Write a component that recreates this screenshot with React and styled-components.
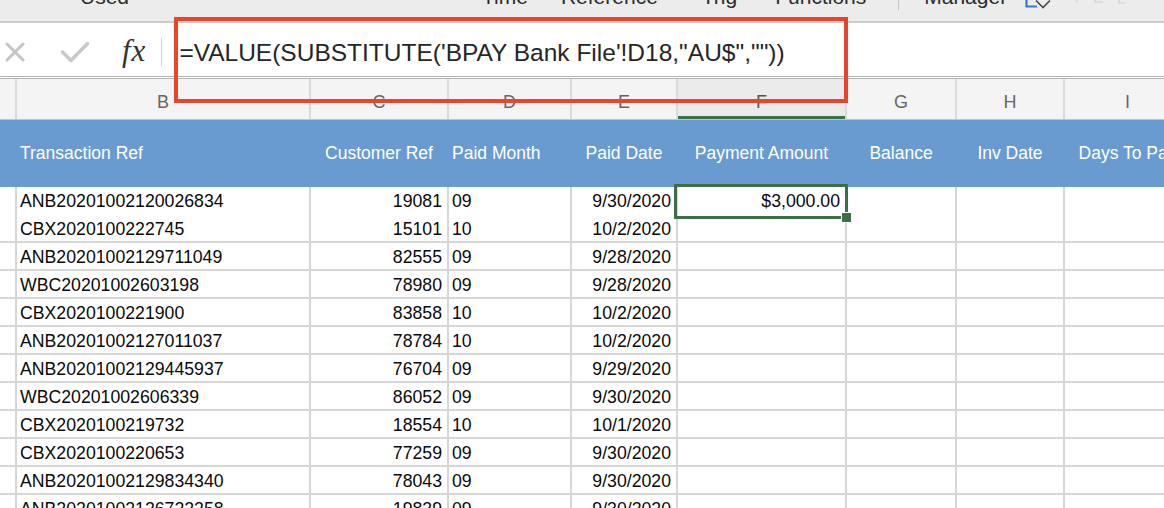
import React from "react";
import styled, { createGlobalStyle } from "styled-components";

const GlobalStyle = createGlobalStyle`
  *, *::before, *::after {
    box-sizing: border-box;
  }
  body {
    margin: 0;
    background: #fff;
    font-family: "Liberation Sans", Arial, sans-serif;
  }
`;

// row header + columns B..I, 2px grid lines come from the gaps
const COLUMNS = "15px 292px 136px 121px 104px 167px 108px 106px 125px";

const Window = styled.div`
  position: relative;
  width: 1164px;
  height: 508px;
  overflow: hidden;
  background: #fff;
`;

const Ribbon = styled.div`
  height: 23px;
  display: flex;
  align-items: flex-start;
  padding-left: 80px;
  background: #ececec;
  border-bottom: 2px solid #cbcbcb;
  overflow: hidden;
`;

const RibbonLabel = styled.span`
  margin-left: ${(p) => p.$gap || 0}px;
  margin-top: -15px;
  font-size: 21px;
  line-height: 24px;
  color: #2b2b2b;
  white-space: nowrap;
`;

const RibbonDivider = styled.span`
  margin-left: ${(p) => p.$gap || 0}px;
  width: 1px;
  height: 10px;
  background: #c2c2c2;
`;

const RibbonIcons = styled.div`
  margin-left: ${(p) => p.$gap || 0}px;
  display: flex;
  gap: 20px;
`;

const FormulaBar = styled.div`
  height: 56px;
  display: flex;
  align-items: center;
  padding-top: 4px;
  background: #fff;
  border-bottom: 3px double #b4b4b4;
`;

const BarIcon = styled.span`
  display: flex;
  margin-left: ${(p) => p.$gap}px;
`;

const Fx = styled.span`
  margin-left: 32px;
  margin-top: -2px;
  font-family: "Liberation Serif", "Times New Roman", serif;
  font-style: italic;
  font-size: 31px;
  letter-spacing: 1px;
  color: #333;
`;

const BarDivider = styled.span`
  margin-left: 15px;
  width: 1px;
  height: 28px;
  background: #d4d4d4;
`;

const Formula = styled.span`
  margin-left: 17px;
  margin-top: 3px;
  font-size: 24.5px;
  color: #262626;
  white-space: nowrap;
`;

const ColumnHeader = styled.div`
  display: grid;
  grid-template-columns: ${COLUMNS};
  column-gap: 2px;
  height: 41px;
  background: #dadada;
  border-bottom: 1px solid #c4c4c4;
`;

const ColumnLetter = styled.div`
  display: flex;
  align-items: center;
  justify-content: center;
  padding-top: 9px;
  background: ${(p) => (p.$active ? "#ebebeb" : "#f4f4f4")};
  color: ${(p) => (p.$active ? "#2f6b3f" : "#666")};
  font-size: 18px;
  border-bottom: 3px solid ${(p) => (p.$active ? "#3a7048" : "transparent")};
`;

const TitleRow = styled.div`
  display: grid;
  grid-template-columns: ${COLUMNS};
  column-gap: 2px;
  height: 67px;
  background: #6a9bd0;
`;

const Title = styled.div`
  display: flex;
  align-items: center;
  justify-content: ${(p) => (p.$align === "left" ? "flex-start" : "center")};
  padding: 0 3px;
  color: #fff;
  font-size: 17.5px;
  white-space: nowrap;
`;

const Rows = styled.div`
  display: flex;
  flex-direction: column;
  gap: 2px;
  background: #d6d6d6;
`;

const Row = styled.div`
  display: grid;
  grid-template-columns: ${COLUMNS};
  column-gap: 2px;
  height: 26px;
`;

const Cell = styled.div`
  position: relative;
  padding: 0 5px 0 3px;
  background: #fff;
  color: #0a0a0a;
  font-size: 17.7px;
  line-height: 28px;
  text-align: ${(p) => p.$align || "left"};
  white-space: nowrap;
  overflow: ${(p) => (p.$selected ? "visible" : "hidden")};

  ${(p) =>
    p.$selected &&
    `
    &::before {
      content: "";
      position: absolute;
      left: -4px;
      right: -3px;
      top: -3px;
      bottom: -4px;
      border: 3px solid #3c6e47;
      z-index: 2;
    }
    &::after {
      content: "";
      position: absolute;
      right: -7px;
      bottom: -8px;
      width: 11px;
      height: 11px;
      background: #3c6e47;
      border: 1px solid #fff;
      z-index: 3;
    }
  `}
`;

const Annotation = styled.div`
  position: absolute;
  left: 174px;
  top: 17px;
  width: 674px;
  height: 86px;
  border: 4px solid #e9452d;
  z-index: 5;
`;

const letters = ["B", "C", "D", "E", "F", "G", "H", "I"];

const titles = [
  { text: "Transaction Ref", align: "left" },
  { text: "Customer Ref" },
  { text: "Paid Month", align: "left" },
  { text: "Paid Date" },
  { text: "Payment Amount" },
  { text: "Balance" },
  { text: "Inv Date" },
  { text: "Days To Pay" },
];

const rows = [
  ["ANB20201002120026834", "19081", "09", "9/30/2020", "$3,000.00"],
  ["CBX2020100222745", "15101", "10", "10/2/2020", ""],
  ["ANB20201002129711049", "82555", "09", "9/28/2020", ""],
  ["WBC20201002603198", "78980", "09", "9/28/2020", ""],
  ["CBX2020100221900", "83858", "10", "10/2/2020", ""],
  ["ANB20201002127011037", "78784", "10", "10/2/2020", ""],
  ["ANB20201002129445937", "76704", "09", "9/29/2020", ""],
  ["WBC20201002606339", "86052", "09", "9/30/2020", ""],
  ["CBX2020100219732", "18554", "10", "10/1/2020", ""],
  ["CBX2020100220653", "77259", "09", "9/30/2020", ""],
  ["ANB20201002129834340", "78043", "09", "9/30/2020", ""],
  ["ANB20201002126722258", "19839", "09", "9/30/2020", ""],
];

const App = () => {
  return (
    <Window>
      <GlobalStyle />
      <Ribbon>
        <RibbonLabel>Used</RibbonLabel>
        <RibbonLabel $gap={353}>Time</RibbonLabel>
        <RibbonLabel $gap={33}>Reference</RibbonLabel>
        <RibbonLabel $gap={44}>Trig</RibbonLabel>
        <RibbonLabel $gap={38}>Functions</RibbonLabel>
        <RibbonDivider $gap={32} />
        <RibbonLabel $gap={25}>Manager</RibbonLabel>
        <RibbonIcons $gap={18}>
          <svg width="30" height="10" viewBox="0 0 30 10">
            <path d="M1.5 0 V6.5 H12" fill="none" stroke="#3b78c9" strokeWidth="2.2" />
            <path d="M11 0.5 L18 7.5 L25 0.5" fill="none" stroke="#4a4a4a" strokeWidth="1.6" />
          </svg>
          <svg width="52" height="6" viewBox="0 0 52 6">
            <path d="M2 0 V3 M20 0 V2 H28 M44 0 V3 H50" fill="none" stroke="#d6d6d6" strokeWidth="1.5" />
          </svg>
        </RibbonIcons>
      </Ribbon>

      <FormulaBar>
        <BarIcon $gap={5}>
          <svg width="20" height="20" viewBox="0 0 20 20">
            <path d="M2 2 L18 18 M18 2 L2 18" stroke="#c4c4c4" strokeWidth="3" strokeLinecap="round" />
          </svg>
        </BarIcon>
        <BarIcon $gap={35}>
          <svg width="30" height="22" viewBox="0 0 30 22">
            <path
              d="M2.5 11 L11 19.5 L27.5 2.5"
              fill="none"
              stroke="#c8c8c8"
              strokeWidth="3.5"
              strokeLinecap="round"
              strokeLinejoin="round"
            />
          </svg>
        </BarIcon>
        <Fx>fx</Fx>
        <BarDivider />
        <Formula>=VALUE(SUBSTITUTE('BPAY Bank File'!D18,"AU$",""))</Formula>
      </FormulaBar>

      <ColumnHeader>
        <ColumnLetter />
        {letters.map((l) => (
          <ColumnLetter key={l} $active={l === "F"}>
            {l}
          </ColumnLetter>
        ))}
      </ColumnHeader>

      <TitleRow>
        <Title />
        {titles.map((t) => (
          <Title key={t.text} $align={t.align}>
            {t.text}
          </Title>
        ))}
      </TitleRow>

      <Rows>
        {rows.map((r, i) => (
          <Row key={r[0]}>
            <Cell />
            <Cell>{r[0]}</Cell>
            <Cell $align="right">{r[1]}</Cell>
            <Cell>{r[2]}</Cell>
            <Cell $align="right">{r[3]}</Cell>
            <Cell $align="right" $selected={i === 0}>
              {r[4]}
            </Cell>
            <Cell />
            <Cell />
            <Cell />
          </Row>
        ))}
      </Rows>

      <Annotation />
    </Window>
  );
};

export default App;
